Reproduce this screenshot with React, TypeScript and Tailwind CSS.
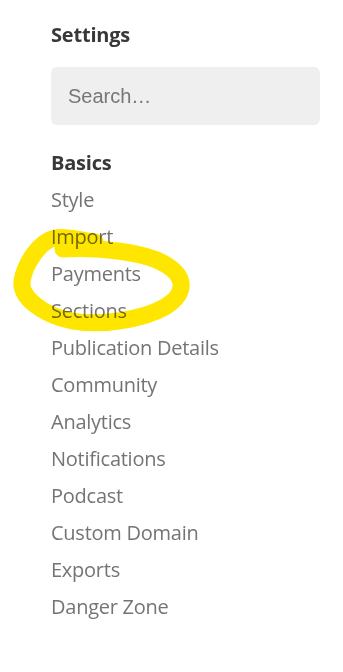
import React from "react";

const items = [
  "Style",
  "Import",
  "Payments",
  "Sections",
  "Publication Details",
  "Community",
  "Analytics",
  "Notifications",
  "Podcast",
  "Custom Domain",
  "Exports",
  "Danger Zone",
];

export default function App() {
  return (
    <div className="relative w-[343px] h-[672px] bg-white overflow-hidden" style={{ fontFamily: "'Open Sans', 'Noto Sans', sans-serif" }}>
      <div className="flex flex-col pl-[51px] pr-[23px] pt-[23px]">
        <h1 className="text-[20px] leading-[24px] font-bold text-[#383838] tracking-[-0.2px]">Settings</h1>
        <div className="mt-[20px] h-[58px] rounded-[6px] bg-[#efefef] flex items-center pl-[17px]">
          <input
            placeholder="Search…"
            className="w-full bg-transparent outline-none text-[20px] text-[#444] placeholder:text-[#777]"
            style={{ fontFamily: "'Liberation Sans', Arial, sans-serif" }}
          />
        </div>
        <nav className="mt-[19px] flex flex-col">
          <div className="h-[37px] flex items-center text-[20px] font-bold text-[#383838] tracking-[-0.2px]">Basics</div>
          {items.map((it) => (
            <a key={it} className="h-[37px] flex items-center text-[20px] font-medium text-[#747474] tracking-[-0.25px]">
              {it}
            </a>
          ))}
        </nav>
      </div>
      <svg className="absolute inset-0 pointer-events-none mix-blend-multiply" width="343" height="672" viewBox="0 0 343 672">
        <path
          d="M 63 249 C 100 247, 148 252, 168 266 C 186 278, 186 294, 165 307 C 142 320, 100 326, 72 321 C 42 315, 20 297, 22 281 C 25 263, 40 241, 55 238 C 65 236, 80 240, 95 242"
          fill="none"
          stroke="#ffe600"
          strokeWidth="17"
          strokeLinecap="round"
          strokeLinejoin="round"
        />
      </svg>
    </div>
  );
}
